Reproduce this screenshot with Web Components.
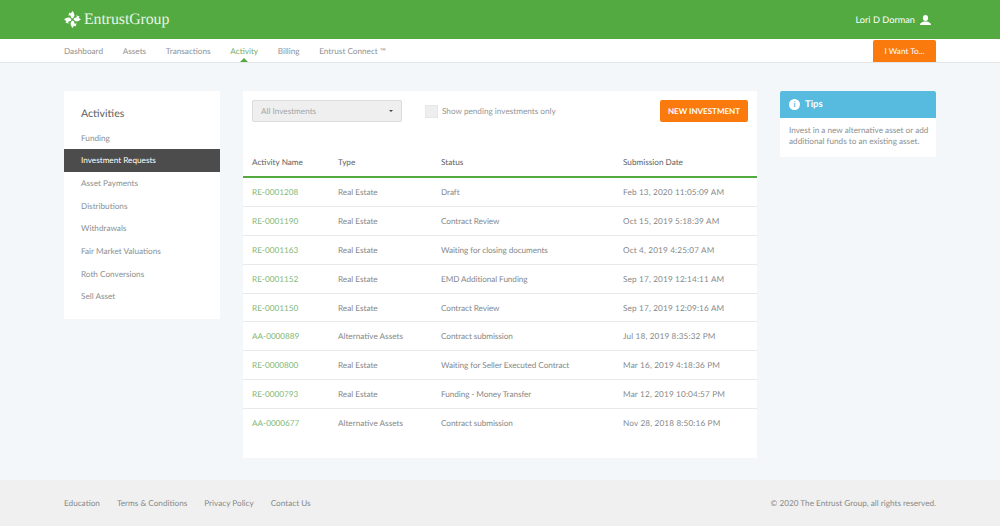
<!DOCTYPE html>
<html>
<head>
<meta charset="utf-8">
<title>Activity</title>
<style>
  html, body { margin: 0; padding: 0; }
  body {
    width: 1000px;
    height: 526px;
    overflow: hidden;
    background: #f4f7f9;
    font-family: Lato, "Noto Sans", sans-serif;
    font-size: 8.2px;
    color: #7b7f80;
    text-rendering: geometricPrecision;
    display: flex;
    flex-direction: column;
  }
</style>
</head>
<body>
<site-header></site-header>
<site-nav></site-nav>
<page-layout>
  <activity-sidebar slot="left"></activity-sidebar>
  <investment-panel slot="main"></investment-panel>
  <tips-card slot="right"></tips-card>
</page-layout>
<site-footer></site-footer>

<script>
class SiteHeader extends HTMLElement {
  constructor() {
    super();
    this.attachShadow({ mode: 'open' });
  }

  connectedCallback() {
    const petal = 'M0 -1 C-2.8 -3 -2.4 -5.4 0 -8.4 C2.4 -5.4 2.8 -3 0 -1Z';
    const petals = [0, 90, 180, 270].map(a => `
      <path d="${petal}" transform="rotate(${a})"/>
      <path d="M1.2 -1.2 L4.6 -2 L3.8 -4.2 L7 -3 L5.6 -.6 L5 -1 L1.6 -.6Z" transform="rotate(${a})"/>
    `).join('');
    this.shadowRoot.innerHTML = `
      <style>
        :host {
          display: flex;
          flex: none;
          align-items: center;
          justify-content: space-between;
          height: 39px;
          box-sizing: border-box;
          padding: 0 69px 0 64px;
          background: #52aa41;
          color: #fff;
        }
        .logo { display: flex; align-items: center; gap: 3px; }
        .word {
          font-family: "Liberation Serif", serif;
          font-size: 15.9px;
          letter-spacing: -.1px;
          color: #e9f4e6;
        }
        .user {
          display: flex;
          align-items: center;
          gap: 5px;
          font-size: 9.2px;
        }
        svg { display: block; fill: #fff; }
      </style>
      <div class="logo">
        <svg width="17" height="17" viewBox="-8.5 -8.5 17 17">${petals}</svg>
        <span class="word">EntrustGroup</span>
      </div>
      <div class="user">
        <span>Lori D Dorman</span>
        <svg width="11" height="10" viewBox="0 0 11 10">
          <ellipse cx="5.5" cy="3" rx="2.6" ry="3"/>
          <path d="M0 10 C0 7.6 2.4 7 4 6.4 L7 6.4 C8.6 7 11 7.6 11 10Z"/>
        </svg>
      </div>
    `;
  }
}

class SiteNav extends HTMLElement {
  constructor() {
    super();
    this.attachShadow({ mode: 'open' });
  }

  connectedCallback() {
    const links = ['Dashboard', 'Assets', 'Transactions', 'Activity', 'Billing', 'Entrust Connect \u2122'];
    this.shadowRoot.innerHTML = `
      <style>
        :host {
          display: flex;
          flex: none;
          justify-content: space-between;
          height: 24px;
          box-sizing: border-box;
          padding: 0 64px;
          background: #fff;
          border-top: 1px solid #fff;
          border-bottom: 1px solid #e4e6e7;
        }
        nav { display: flex; gap: 19.7px; }
        a {
          position: relative;
          display: flex;
          align-items: center;
          color: #8f9293;
        }
        a.active { color: #79ab6c; }
        a.active::after {
          content: '';
          position: absolute;
          left: 50%;
          bottom: 0;
          margin-left: -4px;
          border: 4px solid transparent;
          border-top: 0;
          border-bottom-color: #52aa41;
        }
        .want {
          display: flex;
          align-items: center;
          justify-content: center;
          width: 63px;
          background: #fb7a0e;
          color: #fff;
          border-radius: 2px 2px 0 0;
        }
      </style>
      <nav>${links.map(l => `<a class="${l === 'Activity' ? 'active' : ''}">${l}</a>`).join('')}</nav>
      <div class="want">I Want To...</div>
    `;
  }
}

class PageLayout extends HTMLElement {
  constructor() {
    super();
    this.attachShadow({ mode: 'open' });
    this.shadowRoot.innerHTML = `
      <style>
        :host {
          display: grid;
          flex: 1;
          grid-template-columns: 156px 514px 156px;
          column-gap: 23px;
          align-items: start;
          padding: 28px 64px 0;
        }
      </style>
      <slot name="left"></slot>
      <slot name="main"></slot>
      <slot name="right"></slot>
    `;
  }
}

class ActivitySidebar extends HTMLElement {
  constructor() {
    super();
    this.attachShadow({ mode: 'open' });
  }

  connectedCallback() {
    const items = ['Funding', 'Investment Requests', 'Asset Payments', 'Distributions', 'Withdrawals', 'Fair Market Valuations', 'Roth Conversions', 'Sell Asset'];
    this.shadowRoot.innerHTML = `
      <style>
        :host {
          display: block;
          height: 228px;
          padding-top: 17px;
          box-sizing: border-box;
          background: #fff;
        }
        h2 {
          margin: 0 0 5.5px 17px;
          font-size: 10.6px;
          line-height: 13px;
          font-weight: 400;
          color: #5d6162;
        }
        div {
          height: 22.7px;
          line-height: 22.7px;
          padding-left: 17px;
          color: #8b8f90;
        }
        div.active {
          background: #4c4c4c;
          color: #fff;
        }
      </style>
      <h2>Activities</h2>
      ${items.map(i => `<div class="${i === 'Investment Requests' ? 'active' : ''}">${i}</div>`).join('')}
    `;
  }
}

class InvestmentPanel extends HTMLElement {
  constructor() {
    super();
    this.attachShadow({ mode: 'open' });
  }

  connectedCallback() {
    const rows = [
      ['RE-0001208', 'Real Estate', 'Draft', 'Feb 13, 2020 11:05:09 AM'],
      ['RE-0001190', 'Real Estate', 'Contract Review', 'Oct 15, 2019 5:18:39 AM'],
      ['RE-0001163', 'Real Estate', 'Waiting for closing documents', 'Oct 4, 2019 4:25:07 AM'],
      ['RE-0001152', 'Real Estate', 'EMD Additional Funding', 'Sep 17, 2019 12:14:11 AM'],
      ['RE-0001150', 'Real Estate', 'Contract Review', 'Sep 17, 2019 12:09:16 AM'],
      ['AA-0000889', 'Alternative Assets', 'Contract submission', 'Jul 18, 2019 8:35:32 PM'],
      ['RE-0000800', 'Real Estate', 'Waiting for Seller Executed Contract', 'Mar 16, 2019 4:18:36 PM'],
      ['RE-0000793', 'Real Estate', 'Funding - Money Transfer', 'Mar 12, 2019 10:04:57 PM'],
      ['AA-0000677', 'Alternative Assets', 'Contract submission', 'Nov 28, 2018 8:50:16 PM']
    ];
    this.shadowRoot.innerHTML = `
      <style>
        :host {
          display: block;
          height: 367px;
          background: #fff;
        }
        .tools {
          display: flex;
          align-items: center;
          height: 22px;
          padding: 9px 9px 0;
        }
        .select {
          display: flex;
          align-items: center;
          justify-content: space-between;
          box-sizing: border-box;
          width: 150px;
          height: 22px;
          padding: 0 8px 1px;
          background: #efefef;
          border: 1px solid #dcdcdc;
          border-radius: 2px;
          color: #a3a5a6;
        }
        .select i {
          border: 2px solid transparent;
          border-top-color: #444;
          border-bottom: 0;
        }
        .check {
          width: 13px;
          height: 13px;
          margin: 0 4px 0 23px;
          background: #eee;
          border: 1px solid #e6e6e6;
          box-sizing: border-box;
        }
        .pending { flex: 1; color: #929596; padding-bottom: 1px; }
        .button {
          display: flex;
          align-items: center;
          justify-content: center;
          width: 88px;
          height: 22px;
          background: #fb7a0e;
          border-radius: 2px;
          color: #fff;
          font-weight: 700;
          font-size: 8px;
        }
        .row {
          display: grid;
          grid-template-columns: 86px 103px 182px 1fr;
          align-items: center;
          padding-left: 9px;
          height: 28.9px;
          box-sizing: border-box;
          border-bottom: 1px solid #e9e9e9;
          color: #858889;
        }
        .row.head {
          margin-top: 25px;
          height: 31px;
          border-bottom: 2px solid #52aa41;
          padding-top: 1px;
          color: #5d6162;
        }
        .row:last-child { border-bottom-color: transparent; }
        .row a { color: #82b875; }
        .status { letter-spacing: -.07px; }
        .date { letter-spacing: .16px; }
      </style>
      <div class="tools">
        <div class="select"><span>All Investments</span><i></i></div>
        <div class="check"></div>
        <div class="pending">Show pending investments only</div>
        <div class="button">NEW INVESTMENT</div>
      </div>
      <div class="row head"><span>Activity Name</span><span>Type</span><span>Status</span><span>Submission Date</span></div>
      ${rows.map(r => `<div class="row"><a>${r[0]}</a><span>${r[1]}</span><span class="status">${r[2]}</span><span class="date">${r[3]}</span></div>`).join('')}
    `;
  }
}

class TipsCard extends HTMLElement {
  constructor() {
    super();
    this.attachShadow({ mode: 'open' });
    this.shadowRoot.innerHTML = `
      <style>
        :host {
          display: block;
          background: #fff;
          height: 66px;
        }
        header {
          display: flex;
          align-items: center;
          gap: 5px;
          height: 27px;
          padding: 0 9px;
          background: #56bbdf;
          border-radius: 2px 2px 0 0;
          color: #fff;
          font-size: 9.5px;
          font-weight: 700;
        }
        .dot {
          width: 11px;
          height: 11px;
          border-radius: 50%;
          background: #fff;
          color: #56bbdf;
          font-size: 8px;
          line-height: 11px;
          text-align: center;
        }
        p {
          margin: 0;
          padding: 7px 4px 7px 9px;
          line-height: 11px;
          color: #8b8f90;
        }
      </style>
      <header><span class="dot">i</span>Tips</header>
      <p>Invest in a new alternative asset or add additional funds to an existing asset.</p>
    `;
  }
}

class SiteFooter extends HTMLElement {
  constructor() {
    super();
    this.attachShadow({ mode: 'open' });
  }

  connectedCallback() {
    const links = ['Education', 'Terms & Conditions', 'Privacy Policy', 'Contact Us'];
    this.shadowRoot.innerHTML = `
      <style>
        :host {
          display: flex;
          flex: none;
          align-items: center;
          justify-content: space-between;
          height: 46px;
          padding: 0 64px;
          background: #f0f0f0;
          color: #868a8b;
        }
        nav { display: flex; gap: 17px; }
      </style>
      <nav>${links.map(l => `<a>${l.replace('&', '&amp;')}</a>`).join('')}</nav>
      <span>\u00a9 2020 The Entrust Group, all rights reserved.</span>
    `;
  }
}

customElements.define('site-header', SiteHeader);
customElements.define('site-nav', SiteNav);
customElements.define('page-layout', PageLayout);
customElements.define('activity-sidebar', ActivitySidebar);
customElements.define('investment-panel', InvestmentPanel);
customElements.define('tips-card', TipsCard);
customElements.define('site-footer', SiteFooter);
</script>
</body>
</html>
